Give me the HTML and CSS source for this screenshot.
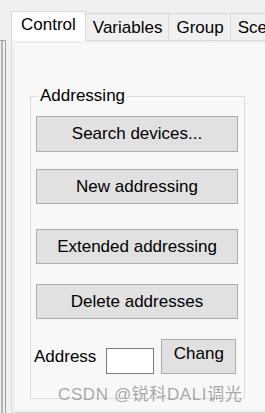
FILE: index.html
```html
<!DOCTYPE html>
<html lang="en">
<head>
    <meta charset="UTF-8">
    <meta name="viewport" content="width=device-width, initial-scale=1.0">
    <title>Control</title>
    <link rel="stylesheet" href="styles.css">
</head>
<body>
    <div class="window">
        <div class="side"></div>
        <div class="tabcontrol">
            <div class="tabs">
                <div class="tab active">Control</div>
                <div class="tab">Variables</div>
                <div class="tab">Group</div>
                <div class="tab">Scenes</div>
            </div>
            <div class="panel">
                <div class="page">
                    <fieldset class="group">
                        <legend>Addressing</legend>
                        <button class="btn btn-search">Search devices...</button>
                        <button class="btn btn-new">New addressing</button>
                        <button class="btn btn-ext">Extended addressing</button>
                        <button class="btn btn-del">Delete addresses</button>
                        <div class="address-row">
                            <span class="address-label">Address</span>
                            <input type="text" class="address-input">
                            <button class="btn btn-chang">Chang</button>
                        </div>
                    </fieldset>
                </div>
            </div>
        </div>
    </div>
    <div class="watermark">CSDN @锐科DALI调光</div>
</body>
</html>
```

FILE: styles.css
```css
body {
    margin: 0;
    background-color: #f0f0f0;
    font-family: "Liberation Sans", Arial, sans-serif;
    font-size: 17px;
    color: #000;
    overflow: hidden;
    height: 413px;
}
.window {
    display: flex;
    height: 413px;
}
.side {
    width: 5px;
    flex-shrink: 0;
    margin-top: 40px;
    border-top: 1px solid #a0a0a0;
    border-right: 1px solid #a0a0a0;
    box-shadow: inset 1px 0 0 #f0f0f0, inset 3px 0 0 #b4b4b4;
}
.tabcontrol {
    margin-left: 5px;
    margin-top: 12px;
    width: 300px;
    display: flex;
    flex-direction: column;
    flex-shrink: 0;
}
.tabs {
    display: flex;
    align-items: flex-end;
    height: 28px;
    position: relative;
    z-index: 1;
}
.tab {
    height: 26px;
    padding: 0 6px 0 7px;
    border: 1px solid #d9d9d9;
    border-left: none;
    border-bottom: none;
    background-color: #f0f0f0;
    line-height: 27px;
    white-space: nowrap;
}
.tab.active {
    height: 29px;
    line-height: 26px;
    padding: 0 9px;
    border-left: 1px solid #d9d9d9;
    background-color: #fff;
    margin-bottom: -1px;
}
.panel {
    flex: 1;
    border: 1px solid #d9d9d9;
    padding: 2px 3px;
}
.page {
    height: 100%;
    background-color: #f8f8f8;
    padding: 43px 0 0 15px;
    box-sizing: border-box;
}
.group {
    width: 202px;
    height: 311px;
    margin: 0;
    padding: 0 6px 0 5px;
    border: 1px solid #dcdcdc;
    box-sizing: content-box;
}
.group legend {
    margin-left: 2px;
    padding: 0 2px;
    line-height: 20px;
}
.btn {
    display: block;
    width: 202px;
    height: 36px;
    padding: 0;
    background-color: #e1e1e1;
    border: 1px solid #adadad;
    border-radius: 0;
    font-family: inherit;
    font-size: 17px;
    color: #000;
}
.btn-search {
    margin-top: 10px;
}
.btn-new {
    margin-top: 17px;
    height: 35px;
}
.btn-ext {
    margin-top: 25px;
    height: 35px;
}
.btn-del {
    margin-top: 20px;
    height: 35px;
}
.address-row {
    display: flex;
    align-items: flex-end;
    margin-top: 20px;
}
.address-label {
    margin-left: -2px;
    margin-bottom: 7px;
}
.address-input {
    width: 46px;
    height: 24px;
    margin: 0 0 0 10px;
    padding: 0;
    border: 1px solid #7a7a7a;
    background-color: #fff;
}
.btn-chang {
    width: 75px;
    height: 35px;
    margin-left: 7px;
    padding-bottom: 6px;
}
.watermark {
    position: absolute;
    left: 58px;
    top: 380px;
    font-family: "Liberation Sans", "Noto Sans CJK SC", sans-serif;
    font-size: 17px;
    letter-spacing: 0.6px;
    color: rgba(140, 140, 140, 0.75);
    white-space: nowrap;
}
```
